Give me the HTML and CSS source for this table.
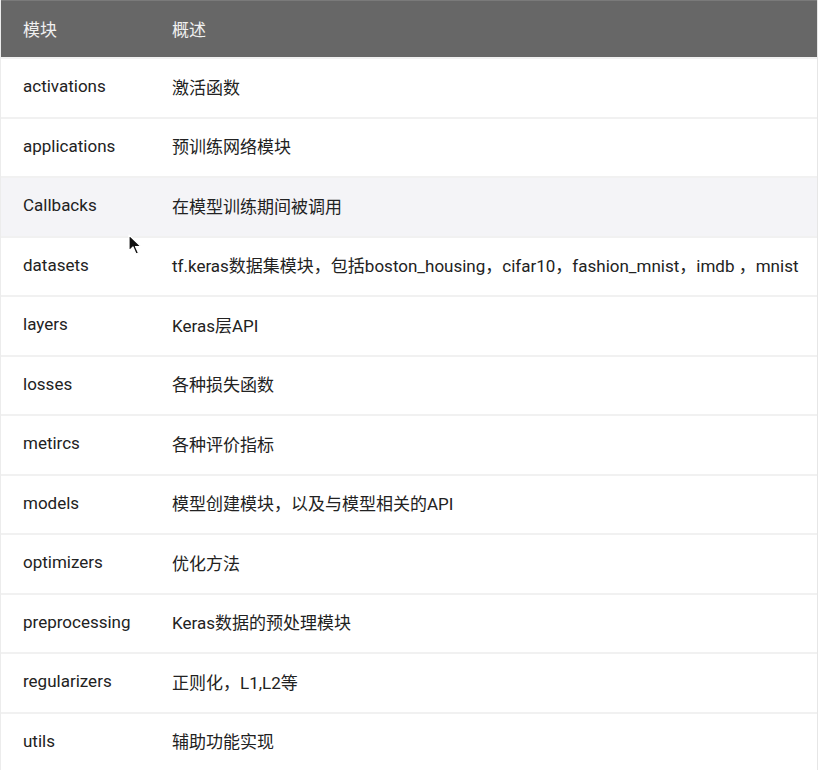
FILE: index.html
```html
<!DOCTYPE html>
<html lang="zh">
<head>
<meta charset="utf-8">
<link rel="stylesheet" href="styles.css">
</head>
<body>
<div class="table">
  <div class="row head"><div class="c1">模块</div><div class="c2">概述</div></div>
  <div class="row"><div class="c1">activations</div><div class="c2">激活函数</div></div>
  <div class="row"><div class="c1">applications</div><div class="c2">预训练网络模块</div></div>
  <div class="row hover"><div class="c1">Callbacks</div><div class="c2">在模型训练期间被调用</div></div>
  <div class="row"><div class="c1">datasets</div><div class="c2">tf.keras数据集模块，包括boston_housing，cifar10，fashion_mnist，imdb ，mnist</div></div>
  <div class="row"><div class="c1">layers</div><div class="c2">Keras层API</div></div>
  <div class="row"><div class="c1">losses</div><div class="c2">各种损失函数</div></div>
  <div class="row"><div class="c1">metircs</div><div class="c2">各种评价指标</div></div>
  <div class="row"><div class="c1">models</div><div class="c2">模型创建模块，以及与模型相关的API</div></div>
  <div class="row"><div class="c1">optimizers</div><div class="c2">优化方法</div></div>
  <div class="row"><div class="c1">preprocessing</div><div class="c2">Keras数据的预处理模块</div></div>
  <div class="row"><div class="c1">regularizers</div><div class="c2">正则化，L1,L2等</div></div>
  <div class="row"><div class="c1">utils</div><div class="c2">辅助功能实现</div></div>
</div>
<svg class="cursor" width="14" height="22" viewBox="0 0 14 22"><path d="M1 1 L1 17 L5 13 L8 20 L10.5 19 L7.5 12.5 L13 12.5 Z" fill="#111" stroke="#fff" stroke-width="1.2" stroke-linejoin="round"/></svg>
</body>
</html>
```

FILE: styles.css
```css
html, body {
  margin: 0;
  padding: 0;
  background: #fff;
}
body {
  font-family: Roboto, "Noto Sans CJK SC", sans-serif;
  font-size: 17px;
  color: #222;
  position: relative;
  width: 819px;
  height: 770px;
  overflow: hidden;
}
.table {
  width: 818px;
  border-left: 1px solid #ececec;
  border-right: 1px solid #e6e6e6;
  box-sizing: border-box;
}
.row {
  display: flex;
  align-items: center;
  height: 59.5px;
  box-sizing: border-box;
  border-top: 2px solid #f1f1f1;
  padding-bottom: 3px;
}
.row.head {
  height: 57px;
  background: #676767;
  color: #f0f0f0;
  border-top: 1px solid #7a7a7a;
  padding-bottom: 2px;
}
.row.hover {
  background: #f4f4f7;
}
.c1 {
  width: 171px;
  padding-left: 22px;
  box-sizing: border-box;
  flex: none;
}
.c2 {
  white-space: nowrap;
}
.cursor {
  position: absolute;
  left: 128px;
  top: 234px;
}
```
